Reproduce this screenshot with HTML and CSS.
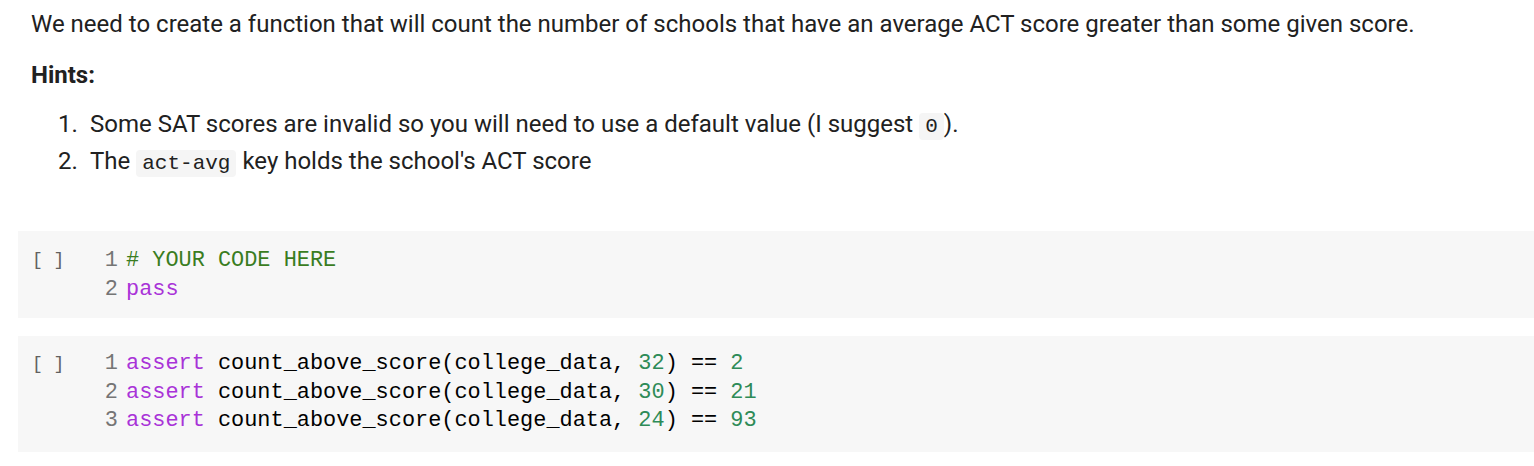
FILE: index.html
```html
<!DOCTYPE html>
<html>
<head>
<meta charset="utf-8">
<link rel="stylesheet" href="styles.css">
</head>
<body>
<div class="page">
  <div class="text-cell">
    <p class="lead">We need to create a function that will count the number of schools that have an average ACT score greater than some given score.</p>
    <p class="hints">Hints:</p>
    <ol class="hint-list">
      <li>Some SAT scores are invalid so you will need to use a default value (I suggest <code class="inline">0</code>).</li>
      <li>The <code class="inline">act-avg</code> key holds the school's ACT score</li>
    </ol>
  </div>

  <div class="code-cell first">
    <div class="run">[ ]</div>
    <div class="lines">
      <div class="line"><span class="ln">1</span><span class="cm"># YOUR CODE HERE</span></div>
      <div class="line"><span class="ln">2</span><span class="kw">pass</span></div>
    </div>
  </div>

  <div class="code-cell second">
    <div class="run">[ ]</div>
    <div class="lines">
      <div class="line"><span class="ln">1</span><span class="kw">assert</span> count_above_score(college_data, <span class="num">32</span>) == <span class="num">2</span></div>
      <div class="line"><span class="ln">2</span><span class="kw">assert</span> count_above_score(college_data, <span class="num">30</span>) == <span class="num">21</span></div>
      <div class="line"><span class="ln">3</span><span class="kw">assert</span> count_above_score(college_data, <span class="num">24</span>) == <span class="num">93</span></div>
    </div>
  </div>
</div>
</body>
</html>
```

FILE: styles.css
```css
html, body {
  margin: 0;
  padding: 0;
  background: #ffffff;
}

.page {
  padding-left: 18px;
  font-family: Roboto, "Noto Sans", sans-serif;
  color: #212121;
}

.text-cell {
  padding-left: 13px;
  font-size: 24px;
  line-height: 30px;
}

.lead {
  margin: 0;
  padding-top: 9px;
}

.hints {
  margin: 21px 0 0 0;
  font-weight: 700;
}

.hint-list {
  margin: 16px 0 0 0;
  padding-left: 59px;
  list-style: none;
  counter-reset: hint;
}

.hint-list li {
  line-height: 37px;
  counter-increment: hint;
}

.hint-list li::before {
  content: counter(hint) ".";
  display: inline-block;
  width: 32px;
  margin-left: -32px;
}

.inline {
  font-family: "Liberation Mono", monospace;
  font-size: 21px;
  line-height: 20px;
  background: #f5f5f5;
  border-radius: 4px;
  padding: 2px 6px;
}

.code-cell {
  display: flex;
  background: #f7f7f7;
  font-family: "Liberation Mono", monospace;
  font-size: 21.9px;
  color: #000000;
}

.code-cell.first {
  margin-top: 51px;
  padding: 15px 0 14px 0;
}

.code-cell.second {
  margin-top: 18px;
  padding: 14px 0 16px 0;
}

.code-cell.second .line {
  line-height: 28.5px;
}

.run {
  width: 58px;
  padding-left: 14px;
  box-sizing: border-box;
  font-size: 18px;
  line-height: 29px;
  color: #616161;
  white-space: pre;
}

.lines {
  display: flex;
  flex-direction: column;
}

.line {
  line-height: 29px;
  white-space: pre;
}

.ln {
  display: inline-block;
  width: 42px;
  text-align: right;
  margin-right: 8px;
  color: #757575;
}

.kw { color: #a933d8; }
.cm { color: #3a7d1f; }
.num { color: #2e8b57; }
```
